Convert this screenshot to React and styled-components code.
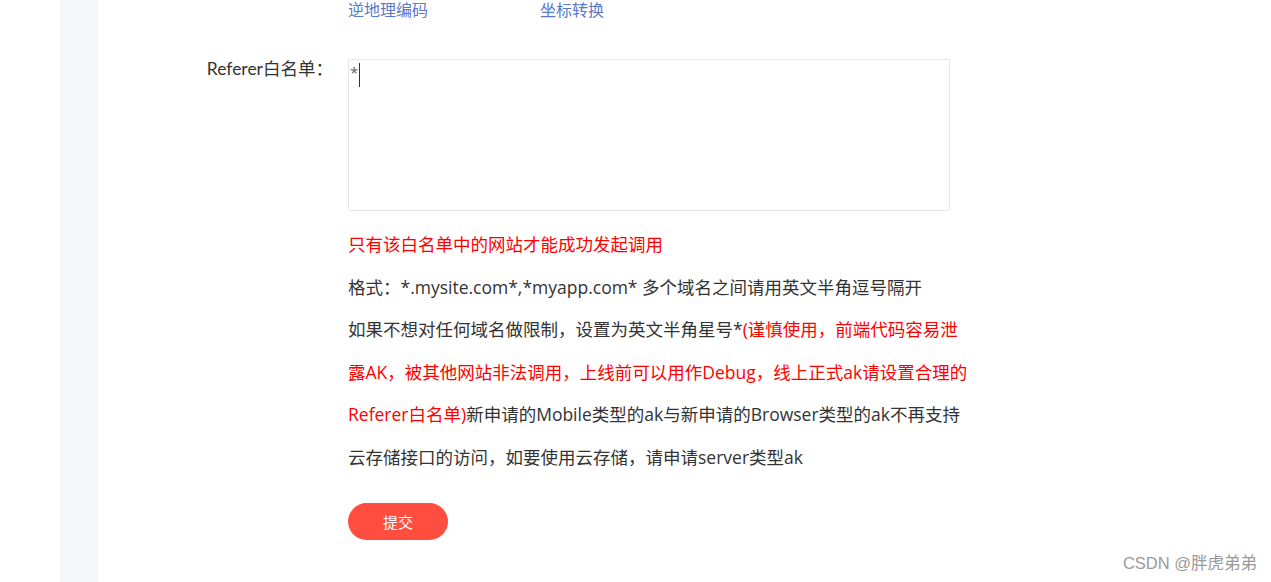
import React from "react"
import styled, { createGlobalStyle } from "styled-components"

const GlobalStyle = createGlobalStyle`
  html, body {
    margin: 0;
    padding: 0;
    background: #fff;
  }
  body {
    font-family: "Open Sans", "Noto Sans CJK SC", sans-serif;
    color: #333;
    overflow: hidden;
  }
`

const Page = styled.div`
  display: flex;
  height: 582px;
  position: relative;
`

const Gutter = styled.div`
  width: 60px;
  flex-shrink: 0;
`

const SideStrip = styled.div`
  width: 38px;
  flex-shrink: 0;
  background: #f5f6fa;
`

const Main = styled.div`
  flex: 1;
  display: flex;
  flex-direction: column;
`

const FormRow = styled.div`
  display: grid;
  grid-template-columns: 229px 1fr;
  column-gap: 21px;
  margin-top: ${p => p.$top || 0}px;
`

const Label = styled.div`
  text-align: right;
  font-family: Lato, "Noto Sans CJK SC", sans-serif;
  font-size: 17.5px;
  line-height: 20px;
  color: #333;
  white-space: nowrap;
  margin-right: -6px;
`

const LinkRow = styled.div`
  display: flex;
  margin-top: -2px;
`

const ApiLink = styled.a`
  width: 192px;
  font-size: 16px;
  line-height: 24px;
  color: #5a79c9;
  text-decoration: none;
`

const Area = styled.div`
  width: 599px;
  height: 148px;
  border: 1px solid #e3e6ec;
  border-radius: 2px;
  font-size: 15px;
  line-height: 20px;
  padding: 2px 0 0 1px;
  box-sizing: content-box;
  color: #666;
  display: flex;
  align-items: flex-start;
`

const Caret = styled.span`
  display: inline-block;
  width: 1px;
  height: 24px;
  background: #333;
  margin-top: 1px;
  margin-left: 1px;
`

const Notes = styled.div`
  margin-top: 12px;
  font-size: 17.5px;
  line-height: 42.6px;
  color: #333;
`

const Line = styled.div`
  white-space: nowrap;
  color: ${p => (p.$red ? "#ff0000" : "inherit")};
`

const Warn = styled.span`
  color: #ff0000;
`

const SubmitButton = styled.button`
  margin-top: 24px;
  width: 100px;
  height: 37px;
  border: none;
  border-radius: 19px;
  background: #ff4d40;
  color: #fff;
  font-family: "Noto Sans CJK SC", sans-serif;
  font-size: 15px;
  cursor: pointer;
`

const Watermark = styled.div`
  position: absolute;
  right: 14px;
  bottom: 8px;
  font-family: "Liberation Sans", "Noto Sans CJK SC", sans-serif;
  font-size: 16.5px;
  color: #999;
`

const App = () => (
  <>
    <GlobalStyle />
    <Page>
      <Gutter />
      <SideStrip />
      <Main>
        <FormRow>
          <div />
          <LinkRow>
            <ApiLink href="#">逆地理编码</ApiLink>
            <ApiLink href="#">坐标转换</ApiLink>
          </LinkRow>
        </FormRow>
        <FormRow $top={37}>
          <Label>Referer白名单：</Label>
          <div>
            <Area>
              *<Caret />
            </Area>
            <Notes>
              <Line $red>只有该白名单中的网站才能成功发起调用</Line>
              <Line>格式：*.mysite.com*,*myapp.com* 多个域名之间请用英文半角逗号隔开</Line>
              <Line>
                如果不想对任何域名做限制，设置为英文半角星号*<Warn>(谨慎使用，前端代码容易泄</Warn>
              </Line>
              <Line $red>露AK，被其他网站非法调用，上线前可以用作Debug，线上正式ak请设置合理的</Line>
              <Line>
                <Warn>Referer白名单)</Warn>新申请的Mobile类型的ak与新申请的Browser类型的ak不再支持
              </Line>
              <Line>云存储接口的访问，如要使用云存储，请申请server类型ak</Line>
            </Notes>
            <SubmitButton>提交</SubmitButton>
          </div>
        </FormRow>
      </Main>
      <Watermark>CSDN @胖虎弟弟</Watermark>
    </Page>
  </>
)

export default App
